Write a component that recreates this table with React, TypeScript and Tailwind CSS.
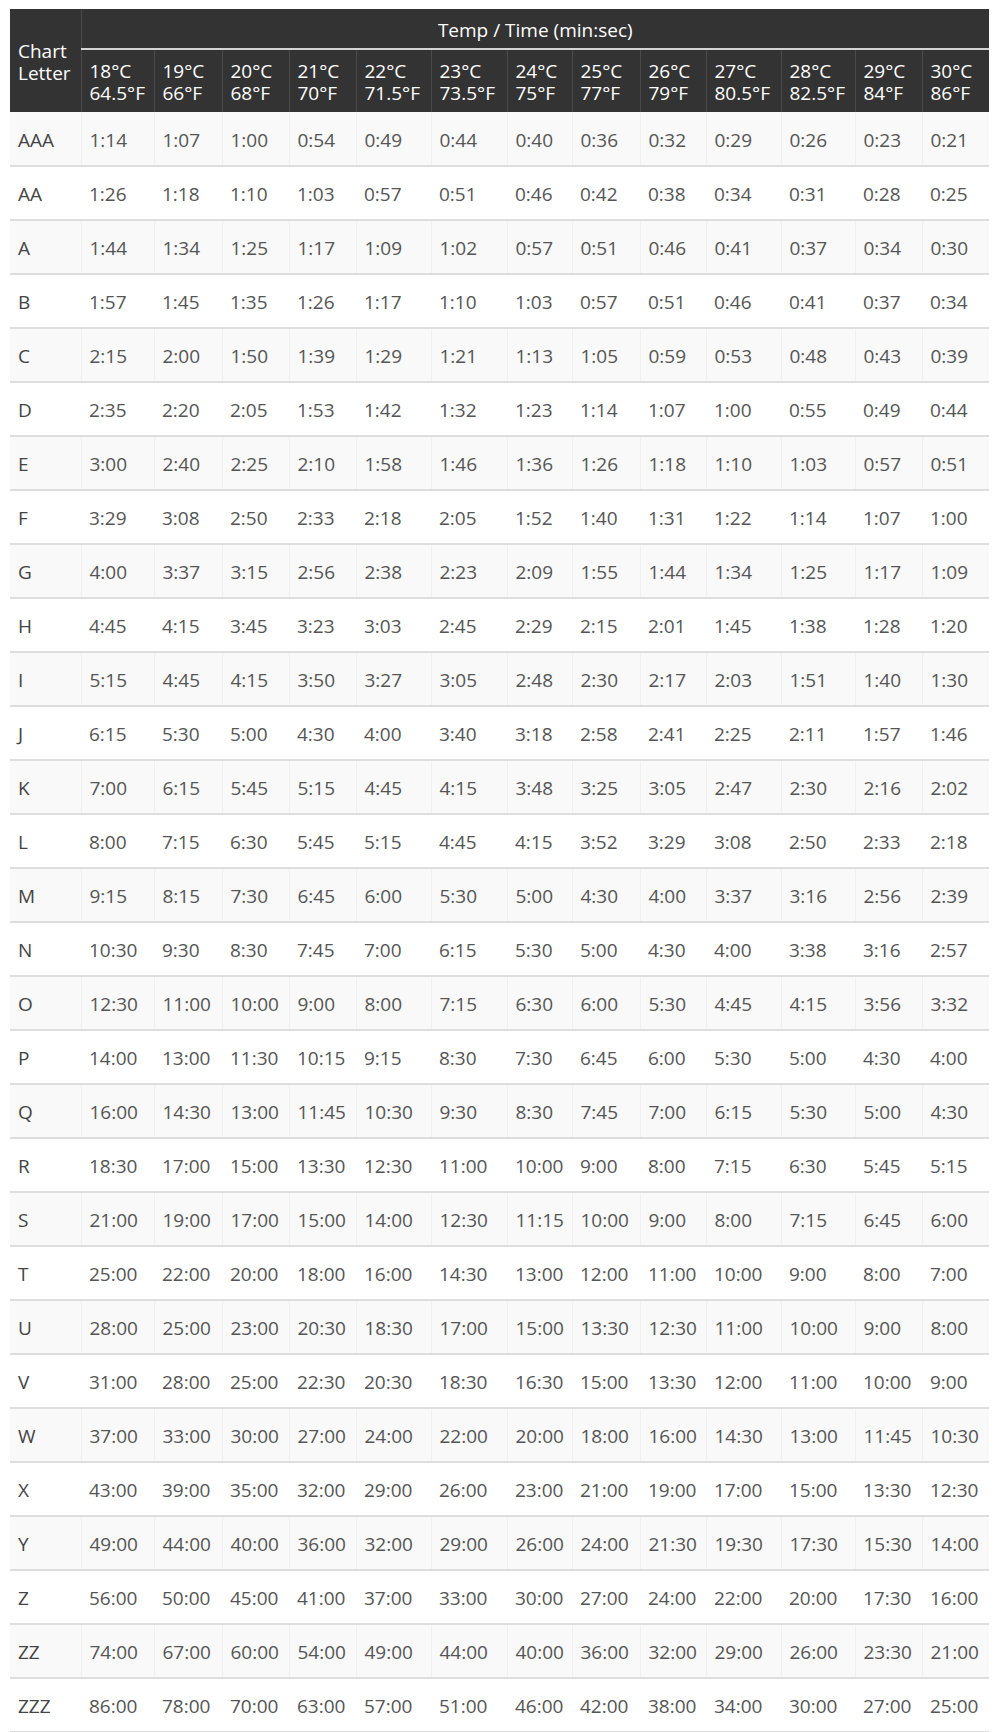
import React from 'react';

const temps = [
  ['18°C', '64.5°F'],
  ['19°C', '66°F'],
  ['20°C', '68°F'],
  ['21°C', '70°F'],
  ['22°C', '71.5°F'],
  ['23°C', '73.5°F'],
  ['24°C', '75°F'],
  ['25°C', '77°F'],
  ['26°C', '79°F'],
  ['27°C', '80.5°F'],
  ['28°C', '82.5°F'],
  ['29°C', '84°F'],
  ['30°C', '86°F'],
];

const colWidths = [
  'w-[71px]', 'w-[73px]', 'w-[68px]', 'w-[67px]', 'w-[67px]', 'w-[75px]', 'w-[76px]',
  'w-[65px]', 'w-[68px]', 'w-[66px]', 'w-[75px]', 'w-[74px]', 'w-[67px]', 'w-[67px]',
];

const rows: [string, string[]][] = [
  ['AAA', ['1:14', '1:07', '1:00', '0:54', '0:49', '0:44', '0:40', '0:36', '0:32', '0:29', '0:26', '0:23', '0:21']],
  ['AA', ['1:26', '1:18', '1:10', '1:03', '0:57', '0:51', '0:46', '0:42', '0:38', '0:34', '0:31', '0:28', '0:25']],
  ['A', ['1:44', '1:34', '1:25', '1:17', '1:09', '1:02', '0:57', '0:51', '0:46', '0:41', '0:37', '0:34', '0:30']],
  ['B', ['1:57', '1:45', '1:35', '1:26', '1:17', '1:10', '1:03', '0:57', '0:51', '0:46', '0:41', '0:37', '0:34']],
  ['C', ['2:15', '2:00', '1:50', '1:39', '1:29', '1:21', '1:13', '1:05', '0:59', '0:53', '0:48', '0:43', '0:39']],
  ['D', ['2:35', '2:20', '2:05', '1:53', '1:42', '1:32', '1:23', '1:14', '1:07', '1:00', '0:55', '0:49', '0:44']],
  ['E', ['3:00', '2:40', '2:25', '2:10', '1:58', '1:46', '1:36', '1:26', '1:18', '1:10', '1:03', '0:57', '0:51']],
  ['F', ['3:29', '3:08', '2:50', '2:33', '2:18', '2:05', '1:52', '1:40', '1:31', '1:22', '1:14', '1:07', '1:00']],
  ['G', ['4:00', '3:37', '3:15', '2:56', '2:38', '2:23', '2:09', '1:55', '1:44', '1:34', '1:25', '1:17', '1:09']],
  ['H', ['4:45', '4:15', '3:45', '3:23', '3:03', '2:45', '2:29', '2:15', '2:01', '1:45', '1:38', '1:28', '1:20']],
  ['I', ['5:15', '4:45', '4:15', '3:50', '3:27', '3:05', '2:48', '2:30', '2:17', '2:03', '1:51', '1:40', '1:30']],
  ['J', ['6:15', '5:30', '5:00', '4:30', '4:00', '3:40', '3:18', '2:58', '2:41', '2:25', '2:11', '1:57', '1:46']],
  ['K', ['7:00', '6:15', '5:45', '5:15', '4:45', '4:15', '3:48', '3:25', '3:05', '2:47', '2:30', '2:16', '2:02']],
  ['L', ['8:00', '7:15', '6:30', '5:45', '5:15', '4:45', '4:15', '3:52', '3:29', '3:08', '2:50', '2:33', '2:18']],
  ['M', ['9:15', '8:15', '7:30', '6:45', '6:00', '5:30', '5:00', '4:30', '4:00', '3:37', '3:16', '2:56', '2:39']],
  ['N', ['10:30', '9:30', '8:30', '7:45', '7:00', '6:15', '5:30', '5:00', '4:30', '4:00', '3:38', '3:16', '2:57']],
  ['O', ['12:30', '11:00', '10:00', '9:00', '8:00', '7:15', '6:30', '6:00', '5:30', '4:45', '4:15', '3:56', '3:32']],
  ['P', ['14:00', '13:00', '11:30', '10:15', '9:15', '8:30', '7:30', '6:45', '6:00', '5:30', '5:00', '4:30', '4:00']],
  ['Q', ['16:00', '14:30', '13:00', '11:45', '10:30', '9:30', '8:30', '7:45', '7:00', '6:15', '5:30', '5:00', '4:30']],
  ['R', ['18:30', '17:00', '15:00', '13:30', '12:30', '11:00', '10:00', '9:00', '8:00', '7:15', '6:30', '5:45', '5:15']],
  ['S', ['21:00', '19:00', '17:00', '15:00', '14:00', '12:30', '11:15', '10:00', '9:00', '8:00', '7:15', '6:45', '6:00']],
  ['T', ['25:00', '22:00', '20:00', '18:00', '16:00', '14:30', '13:00', '12:00', '11:00', '10:00', '9:00', '8:00', '7:00']],
  ['U', ['28:00', '25:00', '23:00', '20:30', '18:30', '17:00', '15:00', '13:30', '12:30', '11:00', '10:00', '9:00', '8:00']],
  ['V', ['31:00', '28:00', '25:00', '22:30', '20:30', '18:30', '16:30', '15:00', '13:30', '12:00', '11:00', '10:00', '9:00']],
  ['W', ['37:00', '33:00', '30:00', '27:00', '24:00', '22:00', '20:00', '18:00', '16:00', '14:30', '13:00', '11:45', '10:30']],
  ['X', ['43:00', '39:00', '35:00', '32:00', '29:00', '26:00', '23:00', '21:00', '19:00', '17:00', '15:00', '13:30', '12:30']],
  ['Y', ['49:00', '44:00', '40:00', '36:00', '32:00', '29:00', '26:00', '24:00', '21:30', '19:30', '17:30', '15:30', '14:00']],
  ['Z', ['56:00', '50:00', '45:00', '41:00', '37:00', '33:00', '30:00', '27:00', '24:00', '22:00', '20:00', '17:30', '16:00']],
  ['ZZ', ['74:00', '67:00', '60:00', '54:00', '49:00', '44:00', '40:00', '36:00', '32:00', '29:00', '26:00', '23:30', '21:00']],
  ['ZZZ', ['86:00', '78:00', '70:00', '63:00', '57:00', '51:00', '46:00', '42:00', '38:00', '34:00', '30:00', '27:00', '25:00']],
];

export default function App() {
  return (
    <div className="min-h-[1732px] bg-white pl-[10px] pt-[9px] font-['Open_Sans',sans-serif] text-[19px]">
      <table className="w-[979px] table-fixed border-collapse">
        <colgroup>
          {colWidths.map((w, i) => (
            <col key={i} className={w} />
          ))}
        </colgroup>
        <thead className="bg-[#333] text-white leading-[22px]">
          <tr>
            {/* first header cell spans both header rows */}
            <th
              rowSpan={2}
              className="border-r border-[#4a4a4a] px-[8px] pt-[2px] text-left font-normal align-middle"
            >
              Chart Letter
            </th>
            <th
              colSpan={13}
              className="h-[40px] border-b-2 border-[#d4d4d4] font-normal text-center pt-[2px]"
            >
              Temp / Time (min:sec)
            </th>
          </tr>
          <tr>
            {temps.map(([c, f], i) => (
              <th
                key={i}
                className={
                  'h-[63px] px-[8px] pt-[2px] text-left font-normal align-middle whitespace-nowrap ' +
                  (i < temps.length - 1 ? 'border-r border-[#4a4a4a]' : '')
                }
              >
                {c}
                <br />
                {f}
              </th>
            ))}
          </tr>
        </thead>
        <tbody>
          {rows.map(([letter, times], r) => (
            <tr key={letter} className={r % 2 === 0 ? 'bg-[#f9f9f9]' : 'bg-white'}>
              <td className="h-[54px] border-b-2 border-[#dedede] px-[8px] pt-[3px] text-[#444] whitespace-nowrap">
                {letter}
              </td>
              {times.map((t, i) => (
                <td
                  key={i}
                  className={
                    'h-[54px] border-b-2 border-[#dedede] px-[8px] pt-[3px] text-[#555] whitespace-nowrap ' +
                    (r % 2 === 0 ? 'border-l border-l-[#f0f0f0]' : '')
                  }
                >
                  {t}
                </td>
              ))}
            </tr>
          ))}
        </tbody>
      </table>
    </div>
  );
}
